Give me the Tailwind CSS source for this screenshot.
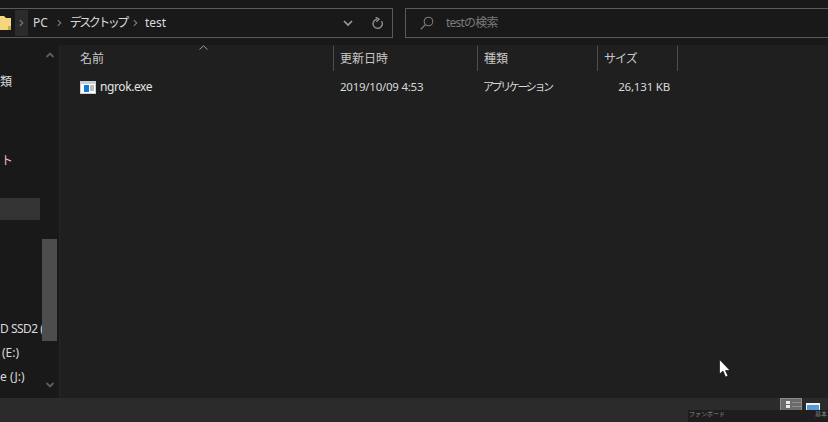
<!DOCTYPE html>
<html lang="ja">
  <head>
    <meta charset="UTF-8" />
    <title>test</title>
    <script src="https://cdn.jsdelivr.net/npm/@tailwindcss/browser@4"></script>
  </head>
  <body class="bg-[#191919]">
    <div class="relative w-[828px] h-[422px] overflow-hidden flex flex-col font-['Noto_Sans','Noto_Sans_CJK_JP',sans-serif] text-[12px] text-[#d9d9d9]">
      <!-- Address and search -->
      <header class="h-[45px] shrink-0 flex pt-[8px] pb-[7px] bg-[#191919]">
        <div class="w-[393px] h-[30px] flex items-center border-y border-r border-[#5a5a5a] bg-[#191919]">
          <svg class="w-[11px] h-[16px] shrink-0" viewBox="0 0 11 16">
            <path d="M0 1h4l2 2h5v12H0z" fill="#f4d67c" />
            <path d="M8 11h3v4H8z" fill="#c9a64f" />
          </svg>
          <div class="w-[13px] h-[26px] ml-[4px] flex items-center justify-center bg-[#2b2b2b]">
            <svg class="w-[5px] h-[8px]" viewBox="0 0 6 8"><path d="M1 0.500 4.500 4 1 7.500" fill="none" stroke="#777777" stroke-width="1.500" /></svg>
          </div>
          <span class="ml-[5px]">PC</span>
          <svg class="w-[5px] h-[8px] ml-[9px] mr-[8px]" viewBox="0 0 6 8"><path d="M1 0.500 4.500 4 1 7.500" fill="none" stroke="#777777" stroke-width="1.500" /></svg>
          <span class="tracking-[-2.500px]">デスクトップ</span>
          <svg class="w-[5px] h-[8px] ml-[6px] mr-[7px]" viewBox="0 0 6 8"><path d="M1 0.500 4.500 4 1 7.500" fill="none" stroke="#777777" stroke-width="1.500" /></svg>
          <span>test</span>
          <div class="ml-auto w-[30px] h-full flex items-center justify-center">
            <svg class="w-[10px] h-[7px]" viewBox="0 0 10 7"><path d="M1 1 5 5 9 1" fill="none" stroke="#9a9a9a" stroke-width="1.700" /></svg>
          </div>
          <div class="w-[29px] h-full flex items-center justify-center">
            <svg class="w-[12px] h-[13px]" viewBox="0 0 12 13"><path d="M5 2.200A4.600 4.600 0 1 0 9.500 4.200" fill="none" stroke="#8f8f8f" stroke-width="1.400" /><path d="M3.600 0 7 2.200 4.400 4.800" fill="none" stroke="#8f8f8f" stroke-width="1.400" /></svg>
          </div>
        </div>
        <div class="ml-[12px] flex-1 h-[30px] flex items-center border-y border-l border-[#5a5a5a] text-[#7a7a7a]">
          <svg class="w-[14px] h-[14px] ml-[14px]" viewBox="0 0 14 14"><circle cx="8.500" cy="5.500" r="4.300" fill="none" stroke="#7a7a7a" stroke-width="1.100" /><path d="M5.400 8.600 0.800 13.200" stroke="#7a7a7a" stroke-width="1.300" /></svg>
          <span class="ml-[12px] tracking-[-0.800px]">testの検索</span>
        </div>
      </header>

      <div class="flex-1 flex min-h-0">
        <!-- Navigation pane -->
        <aside class="w-[60px] shrink-0 flex bg-[#191919] border-r border-[#262626]">
          <nav class="w-[42px] shrink-0 overflow-hidden whitespace-nowrap">
            <div class="h-[25px] mt-[24px] leading-[25px]">類</div>
            <div class="h-[24px] mt-[55px] leading-[24px] ml-[1px] text-[#f0b8d0]">ト</div>
            <div class="h-[22px] mt-[25px] w-[40px] bg-[#333333]"></div>
            <div class="h-[24px] mt-[97px] leading-[24px] tracking-[-0.500px]">D SSD2 (</div>
            <div class="h-[24px] leading-[24px] ml-[2px]">(E:)</div>
            <div class="h-[24px] leading-[24px]">e (J:)</div>
          </nav>
          <div class="w-[15px] shrink-0 flex flex-col items-center">
            <svg class="w-[8px] h-[6px] mt-[7px]" viewBox="0 0 8 6"><path d="M0.500 5 4 1.500 7.500 5" fill="none" stroke="#5f5f5f" stroke-width="1.800" /></svg>
            <div class="w-[15px] h-[102px] mt-[181px] bg-[#4d4d4d]"></div>
            <svg class="w-[8px] h-[6px] mt-[41px]" viewBox="0 0 8 6"><path d="M0.500 1 4 4.500 7.500 1" fill="none" stroke="#5f5f5f" stroke-width="1.800" /></svg>
          </div>
        </aside>

        <!-- File list -->
        <main class="flex-1 bg-[#1f1f1f] relative">
          <div class="h-[26px] flex items-end text-[#c8c8c8]">
            <div class="w-[274px] h-[25px] pl-[20px] leading-[25px] border-r border-[#4f4f4f] relative">
              名前
              <svg class="absolute left-[139px] -top-[1px] w-[9px] h-[5px]" viewBox="0 0 9 5"><path d="M0.500 4.500 4.500 0.800 8.500 4.500" fill="none" stroke="#9a9a9a" /></svg>
            </div>
            <div class="w-[144px] h-[25px] pl-[6px] leading-[25px] border-r border-[#4f4f4f]">更新日時</div>
            <div class="w-[120px] h-[25px] pl-[6px] leading-[25px] border-r border-[#4f4f4f]">種類</div>
            <div class="w-[80px] h-[25px] pl-[6px] leading-[25px] border-r border-[#4f4f4f] tracking-[-1px]">サイズ</div>
          </div>
          <div class="h-[20px] mt-[6px] flex items-center">
            <div class="w-[274px] flex items-center pl-[20px]">
              <svg class="w-[16px] h-[13px]" viewBox="0 0 16 13">
                <rect width="16" height="13" fill="#c9ced2" />
                <rect x="1" y="3" width="14" height="9" fill="#fff" />
                <rect x="4" y="4" width="5" height="7" fill="#0f78d8" />
                <path d="M10 5h4M10 7h4M10 9h4" stroke="#7a7a7a" />
              </svg>
              <span class="ml-[4px] text-[#e4e4e4] tracking-[-0.400px]">ngrok.exe</span>
            </div>
            <div class="w-[144px] pl-[6px] text-[11.500px] tracking-[-0.250px]">2019/10/09 4:53</div>
            <div class="w-[120px] pl-[5px] text-[11px] tracking-[-2.400px]">アプリケーション</div>
            <div class="w-[72px] text-right text-[11.500px] tracking-[-0.200px]">26,131 KB</div>
          </div>
          <!-- Mouse pointer -->
          <svg class="absolute left-[659px] top-[314px] w-[12px] h-[19px]" viewBox="0 0 12 19">
            <path d="M0.500 0.500V15L4 12l2.500 6 2.500-1-2.500-5.500H11z" fill="#fff" stroke="#000" stroke-width="0.600" />
          </svg>
        </main>
      </div>

      <!-- Status bar -->
      <footer class="h-[24px] shrink-0 bg-[#2b2b2b] relative">
        <div class="absolute left-[780px] top-0 w-[22px] h-[24px] bg-[#6b6b6b] border border-[#8c8c8c] pt-[2px] pl-[5px] flex flex-col gap-[1px]">
          <div class="flex items-center gap-[2px]">
            <div class="w-[4px] h-[3px] bg-[#e8e8e8]"></div>
            <div class="w-[9px] h-[1px] bg-[#8f8f8f]"></div>
          </div>
          <div class="flex items-center gap-[2px]">
            <div class="w-[4px] h-[3px] bg-[#e8e8e8]"></div>
            <div class="w-[9px] h-[1px] bg-[#8f8f8f]"></div>
          </div>
        </div>
        <svg class="absolute left-[806px] top-[5px] w-[14px] h-[12px]" viewBox="0 0 14 12">
          <rect width="14" height="12" fill="#eef2f5" />
          <rect x="1" y="2" width="12" height="5" fill="#5b9bd5" />
          <rect x="1" y="7" width="12" height="3" fill="#4d7a5a" />
        </svg>
        <div class="absolute left-[688px] top-[12px] w-[140px] h-[12px] bg-[#1e1e1e] flex justify-between px-[1px] text-[6px] leading-[9px] text-[#8a8a8a]">
          <span>ファンボード</span>
          <span>基本</span>
        </div>
      </footer>
    </div>
  </body>
</html>
